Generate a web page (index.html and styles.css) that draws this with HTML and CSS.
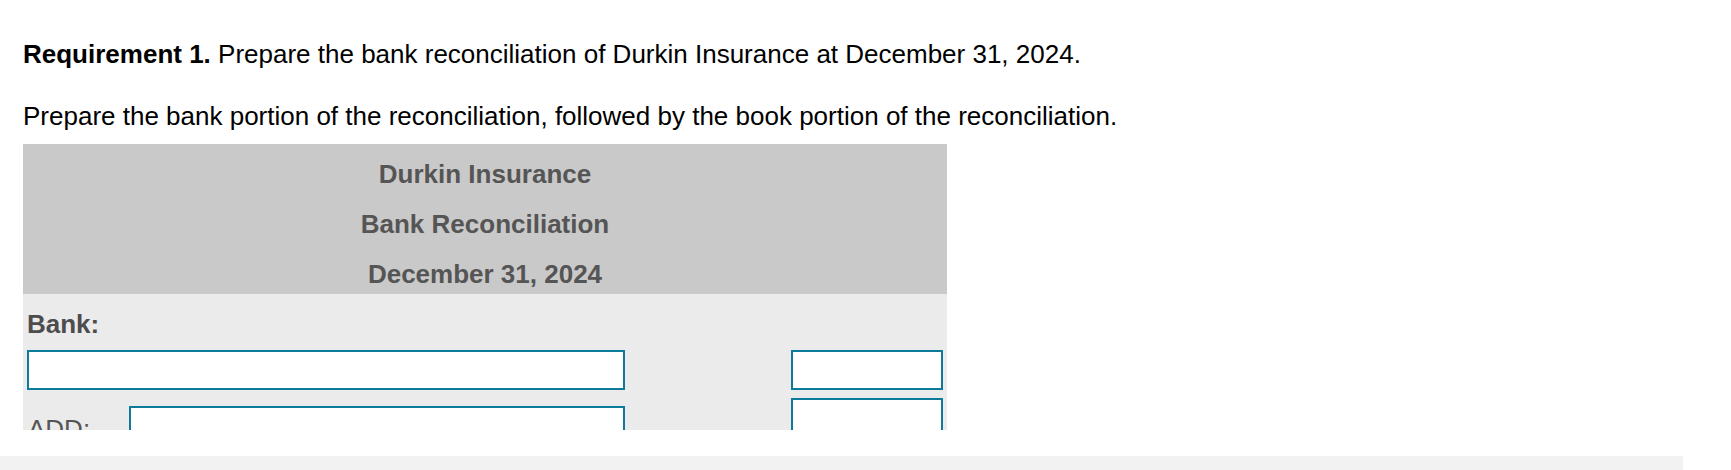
FILE: index.html
```html
<!DOCTYPE html>
<html lang="en">
<head>
<meta charset="utf-8">
<title>Bank Reconciliation</title>
<link rel="stylesheet" href="styles.css">
</head>
<body>
<div class="page">
  <div class="content">
    <p class="req"><strong>Requirement 1.</strong> Prepare the bank reconciliation of Durkin Insurance at December 31, 2024.</p>
    <p class="instr">Prepare the bank portion of the reconciliation, followed by the book portion of the reconciliation.</p>
    <div class="panel">
      <div class="panel-head">
        <div class="head-line">Durkin Insurance</div>
        <div class="head-line">Bank Reconciliation</div>
        <div class="head-line">December 31, 2024</div>
      </div>
      <div class="panel-body">
        <div class="section-label">Bank:</div>
        <div class="row">
          <div class="left">
            <div class="field field-wide"></div>
          </div>
          <div class="field field-amt"></div>
        </div>
        <div class="row row-add">
          <div class="left left-add">
            <span class="add-label">ADD:</span>
            <div class="field field-add"></div>
          </div>
          <div class="field field-amt field-amt-tall"></div>
        </div>
      </div>
    </div>
  </div>
  <div class="footer-bar"></div>
</div>
</body>
</html>
```

FILE: styles.css
```css
html, body {
  margin: 0;
  padding: 0;
  background: #ffffff;
}

body {
  font-family: "Liberation Sans", Arial, Helvetica, sans-serif;
  color: #000000;
  width: 1731px;
  height: 470px;
  overflow: hidden;
}

.page {
  display: flex;
  flex-direction: column;
}

.content {
  padding: 39px 0 0 23px;
}

.req,
.instr {
  margin: 0;
  font-size: 26px;
  line-height: 30px;
  color: #000000;
  white-space: nowrap;
}

.req strong {
  font-weight: bold;
}

.instr {
  margin-top: 32px;
}

.panel {
  margin-top: 13px;
  width: 924px;
  height: 286px;
  overflow: hidden;
  background: #ebebeb;
}

.panel-head {
  box-sizing: border-box;
  height: 150px;
  padding-top: 5px;
  background: #c9c9c9;
  overflow: hidden;
}

.head-line {
  text-align: center;
  font-size: 26px;
  font-weight: bold;
  line-height: 50px;
  color: #555555;
}

.panel-body {
  padding: 0 4px;
}

.section-label {
  padding: 15px 0 0 0;
  line-height: 30px;
  font-size: 26px;
  font-weight: bold;
  color: #4d4d4d;
}

.row {
  display: flex;
  align-items: flex-start;
  justify-content: space-between;
  margin-top: 11px;
}

.row-add {
  margin-top: 8px;
}

.left {
  width: 598px;
  display: flex;
  align-items: flex-start;
}

.left-add {
  margin-top: 8px;
}

.field {
  box-sizing: border-box;
  height: 40px;
  background: #ffffff;
  border: 2px solid #0b7a9b;
}

.field-wide {
  width: 598px;
}

.field-amt {
  width: 152px;
}

.field-amt-tall {
  height: 48px;
}

.add-label {
  width: 102px;
  padding: 8px 0 0 1px;
  box-sizing: border-box;
  font-size: 26px;
  line-height: 30px;
  color: #555555;
}

.field-add {
  width: 496px;
}

.footer-bar {
  margin-top: 26px;
  width: 1683px;
  height: 14px;
  background: #f2f2f2;
}
```
